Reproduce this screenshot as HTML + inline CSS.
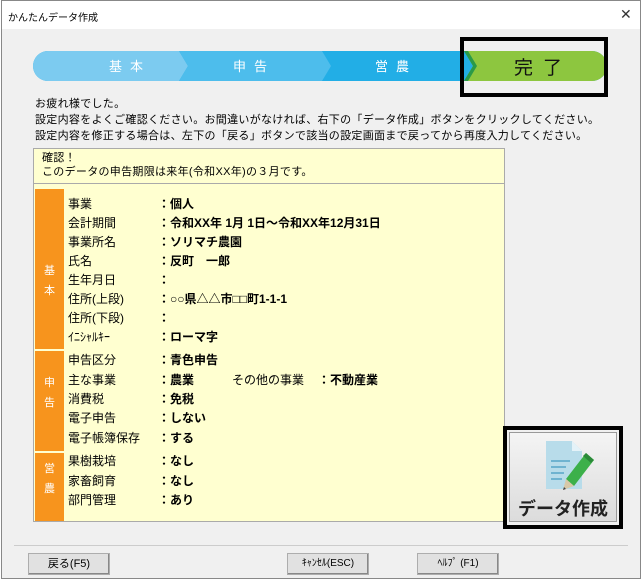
<!DOCTYPE html>
<html><head><meta charset="utf-8"><style>
body{margin:0;width:642px;height:579px;overflow:hidden;background:#fff;font-family:"Liberation Sans","Noto Sans CJK JP",sans-serif;font-size:12px;color:#000}
.win{position:absolute;left:1px;top:0;width:638px;height:577px;border:1px solid #888;background:#f0f0f0}
.title{position:absolute;left:0;top:0;width:638px;height:28px;background:#fff}
.a{position:absolute;white-space:nowrap}
.btn{position:absolute;height:20px;background:#e1e1e1;border:1px solid #adadad;box-shadow:inset -1px -1px #888;font-size:11px;text-align:center;line-height:20px}
.row{position:absolute;left:66px;font-size:12px;white-space:nowrap;width:400px;height:18px}
.v{position:absolute;left:90px;top:0;font-weight:bold;white-space:nowrap}
.t{font-size:11px;letter-spacing:0.3px}
</style></head><body>
<div class="win">
<div class="title"><span class="a" style="left:6px;top:8px;font-size:10px">かんたんデータ作成</span><span class="a" style="left:618px;top:5px;font-size:14px;color:#333">✕</span></div>
<svg class="a" style="left:30px;top:49px" width="580" height="32">
<rect x="1" y="1" width="574" height="30" rx="15" fill="#22aee6"/>
<path d="M16 1 H147 L156 16 L147 31 H16 A15 15 0 0 1 16 1Z" fill="#7ccbf0"/>
<path d="M147 1 H290 L299 16 L290 31 H147 L156 16Z" fill="#4dbdec"/>
<path d="M432 1 H560 A15 15 0 0 1 560 31 H432 L441 16Z" fill="#8dc63f"/>
<path d="M432 1 L441 16 L432 31 L436 31 L445 16 L436 1Z" fill="#2a9a48"/>
<text x="77" y="21" fill="#fff" font-size="13" font-family="Noto Sans CJK JP" letter-spacing="8">基本</text>
<text x="201" y="21" fill="#fff" font-size="13" font-family="Noto Sans CJK JP" letter-spacing="8">申告</text>
<text x="343" y="21" fill="#fff" font-size="13" font-family="Noto Sans CJK JP" letter-spacing="8">営農</text>
<text x="482" y="24" fill="#111" font-size="19" font-family="Noto Sans CJK JP" letter-spacing="10">完了</text>
</svg>
<div class="a" style="left:458px;top:36px;width:140px;height:52px;border:4px solid #000"></div>
<div class="a t" style="left:33px;top:94px">お疲れ様でした。</div>
<div class="a t" style="left:33px;top:110px">設定内容をよくご確認ください。お間違いがなければ、右下の「データ作成」ボタンをクリックしてください。</div>
<div class="a t" style="left:33px;top:126px">設定内容を修正する場合は、左下の「戻る」ボタンで該当の設定画面まで戻ってから再度入力してください。</div>
<div class="a" style="left:31px;top:147px;width:470px;height:372px;background:#ffffd0;border:1px solid #aaa">
 <div class="a t" style="left:8px;top:2px;line-height:14px">確認！<br>このデータの申告期限は来年(令和XX年)の３月です。</div>
 <div class="a" style="left:0;top:34px;width:470px;border-top:1px solid #aaa"></div>
 <div class="a" style="left:1px;top:40px;width:29px;height:160px;background:#f7941d;color:#fff;font-size:11px;text-align:center;padding-top:72px;box-sizing:border-box;line-height:20px">基<br>本</div>
 <div class="a" style="left:1px;top:202px;width:29px;height:100px;background:#f7941d;color:#fff;font-size:11px;text-align:center;padding-top:22px;box-sizing:border-box;line-height:20px">申<br>告</div>
 <div class="a" style="left:1px;top:304px;width:29px;height:68px;background:#f7941d;color:#fff;font-size:11px;text-align:center;padding-top:6px;box-sizing:border-box;line-height:20px">営<br>農</div>
</div>
<div class="row" style="top:194px">事業<span class="v">：個人</span></div>
<div class="row" style="top:213px">会計期間<span class="v">：令和XX年 1月 1日～令和XX年12月31日</span></div>
<div class="row" style="top:232px">事業所名<span class="v">：ソリマチ農園</span></div>
<div class="row" style="top:251px">氏名<span class="v">：反町　一郎</span></div>
<div class="row" style="top:270px">生年月日<span class="v">：</span></div>
<div class="row" style="top:289px">住所(上段)<span class="v">：○○県△△市□□町1-1-1</span></div>
<div class="row" style="top:308px">住所(下段)<span class="v">：</span></div>
<div class="row" style="top:327px">ｲﾆｼｬﾙｷｰ<span class="v">：ローマ字</span></div>
<div class="row" style="top:350px">申告区分<span class="v">：青色申告</span></div>
<div class="row" style="top:370px">主な事業<span class="v">：農業</span><span class="a" style="left:164px;top:0">その他の事業</span><span class="v" style="left:250px">：不動産業</span></div>
<div class="row" style="top:389px">消費税<span class="v">：免税</span></div>
<div class="row" style="top:408px">電子申告<span class="v">：しない</span></div>
<div class="row" style="top:428px">電子帳簿保存<span class="v">：する</span></div>
<div class="row" style="top:451px">果樹栽培<span class="v">：なし</span></div>
<div class="row" style="top:471px">家畜飼育<span class="v">：なし</span></div>
<div class="row" style="top:490px">部門管理<span class="v">：あり</span></div>
<div class="a" style="left:501px;top:425px;width:112px;height:95px;border:4px solid #000"></div>
<div class="a" style="left:507px;top:431px;width:106px;height:88px;background:linear-gradient(#f4f4f4,#dcdcdc);border:1px solid #999">
 <svg class="a" style="left:26px;top:6px" width="60" height="56">
  <path d="M10 2 H36 L46 12 V50 H10Z" fill="#b8dcea"/>
  <path d="M36 2 V12 H46Z" fill="#e4f2f8"/>
  <g stroke="#6fb3d0" stroke-width="2"><line x1="15" y1="22" x2="34" y2="22"/><line x1="15" y1="28" x2="30" y2="28"/><line x1="15" y1="34" x2="28" y2="34"/><line x1="15" y1="40" x2="26" y2="40"/></g>
  <path d="M30 40 L50 14 L58 21 L38 47Z" fill="#3cb04a"/>
  <path d="M50 14 L58 21 L55 24 L47 17Z" fill="#2a8a38"/>
  <path d="M30 40 L38 47 L27 51Z" fill="#d8c8a8"/>
  <path d="M28 48 L27 51 L30 50Z" fill="#444"/>
 </svg>
 <span class="a" style="left:8px;top:62px;font-size:18px;font-weight:bold;color:#222">データ作成</span>
</div>
<div class="a" style="left:12px;top:544px;width:614px;border-top:1px solid #ccc"></div>
<div class="btn" style="left:26px;top:552px;width:80px">戻る(F5)</div>
<div class="btn" style="left:285px;top:552px;width:80px;font-size:10px">ｷｬﾝｾﾙ(ESC)</div>
<div class="btn" style="left:415px;top:552px;width:80px;font-size:10px">ﾍﾙﾌﾟ (F1)</div>
</div>
</body></html>
